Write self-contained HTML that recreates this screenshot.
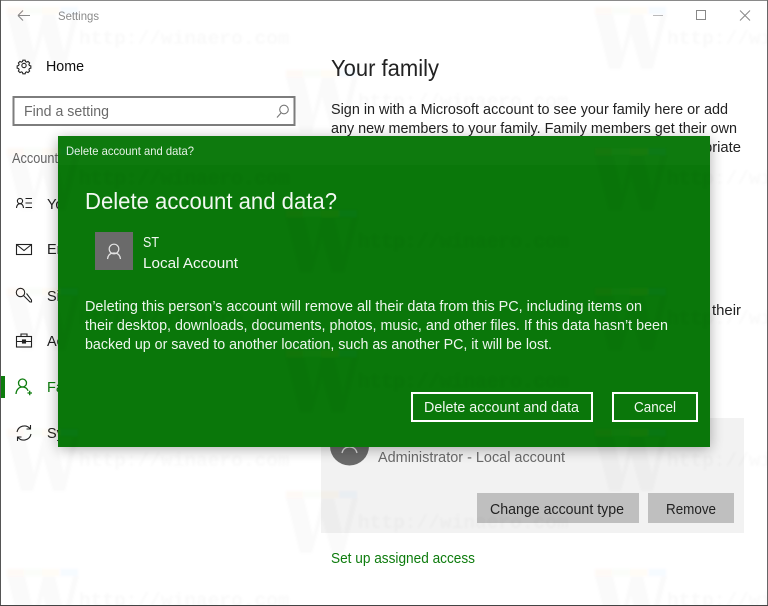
<!DOCTYPE html>
<html><head><meta charset="utf-8"><title>Settings</title>
<style>
html,body{margin:0;padding:0;background:#fff;width:768px;height:606px;overflow:hidden}
svg{display:block;position:absolute;left:0;top:0}
text{font-family:"Liberation Sans",sans-serif;font-size:14.5px;white-space:pre}
.wm{font-family:"Liberation Mono",monospace;font-weight:bold;font-size:19.5px;fill:#000;opacity:.022}
.w{fill:#000;opacity:.02}
.ic{fill:none;stroke:#222;stroke-width:1.1}
</style></head><body>
<svg width="768" height="606" viewBox="0 0 768 606" xmlns="http://www.w3.org/2000/svg">
<defs>
<filter id="sh" x="-10%" y="-15%" width="120%" height="130%"><feGaussianBlur stdDeviation="7"/></filter>
<filter id="soft" x="-2%" y="-2%" width="104%" height="104%"><feGaussianBlur stdDeviation="1"/></filter>
<filter id="tx" x="-2%" y="-20%" width="104%" height="140%"><feGaussianBlur stdDeviation="0.35"/></filter>
<g id="W">
<polygon class="w" points="0,0 18,0 27,38 36,0 48,0 57,38 66,0 72,0 58,55 46,55 36,20 26,55 14,55"/>
<rect x="0" y="-7" width="17" height="7" fill="#e8492a" opacity=".035"/>
<rect x="17" y="-7" width="18" height="7" fill="#8bc34a" opacity=".035"/>
<rect x="35" y="-7" width="18" height="7" fill="#f7b500" opacity=".035"/>
<rect x="53" y="-7" width="18" height="7" fill="#2196f3" opacity=".035"/>
</g>
</defs>
<rect width="768" height="606" fill="#fff"/>

<g filter="url(#tx)">
<!-- title bar -->
<path d="M30 15.5H18M18 15.5l5-5M18 15.5l5 5" fill="none" stroke="#8a8a8a" stroke-width="1.1"/>
<text x="58" y="20" fill="#8a8a8a" textLength="41" lengthAdjust="spacingAndGlyphs" style="font-size:12px">Settings</text>
<rect x="653" y="15" width="10" height="1" fill="#bbb"/>
<rect x="696.5" y="10.5" width="9" height="9" fill="none" stroke="#888" stroke-width="1"/>
<path d="M740 10.5l10 10M750 10.5l-10 10" stroke="#888" stroke-width="1" fill="none"/>

<!-- home -->
<g transform="translate(24,65.5) scale(.72)" fill="none" stroke="#222" stroke-width="1.5">
<circle r="3"/>
<path d="M-1.6-7.4h3.2l.5 2 1.6.7 1.9-1 2.2 2.2-1 1.9.7 1.6 2 .5v3.2l-2 .5-.7 1.6 1 1.9-2.2 2.2-1.9-1-1.6.7-.5 2h-3.2l-.5-2-1.6-.7-1.9 1-2.2-2.2 1-1.9-.7-1.6-2-.5v-3.2l2-.5.7-1.6-1-1.9 2.2-2.2 1.9 1 1.6-.7z"/>
</g>
<text x="46" y="71" fill="#111" textLength="38" lengthAdjust="spacingAndGlyphs">Home</text>

<!-- search -->
<rect x="13.500" y="97" width="281" height="28" fill="#fff" stroke="#7d7d7d" stroke-width="2"/>
<text x="24" y="116" fill="#6a6a6a" textLength="85" lengthAdjust="spacingAndGlyphs">Find a setting</text>
<circle cx="284" cy="109.500" r="4.300" fill="none" stroke="#777" stroke-width="1.100"/>
<path d="M281 113l-4 4.500" stroke="#777" stroke-width="1.100" fill="none"/>

<!-- sidebar -->
<text x="12" y="163" fill="#666" textLength="46" lengthAdjust="spacingAndGlyphs">Account</text>

<g class="ic">
<circle cx="20" cy="201" r="2.600"/>
<path d="M16.500 208c.3-3 1.800-4.300 3.500-4.300s3.200 1.300 3.500 4.300"/>
<path d="M25.500 198.500h6.500M25.500 203h6.500M25.500 207.500h6.500"/>
<rect x="16.500" y="244.500" width="15" height="10"/>
<path d="M16.500 244.500l7.500 6 7.500-6"/>
<circle cx="20.500" cy="292.500" r="4.200"/>
<path d="M23.500 295.500l6.500 6.500h1.500v-2l-5-6.500"/>
<rect x="16.500" y="336.500" width="15" height="10.500"/>
<path d="M21 336.500v-2.500h6v2.500M16.500 341.500h15"/>
<rect x="22.500" y="340" width="3" height="3" fill="#222"/>
<path d="M30 428.500a7.500 7.500 0 0 0-13 3.500M18 437.500a7.500 7.500 0 0 0 13-3.500M30.500 425v4h-4M17.500 441v-4h4"/>
</g>
<g fill="none" stroke="#107c10" stroke-width="1.300">
<circle cx="22.500" cy="383" r="4"/>
<path d="M16 394c.4-4.500 3-7 6.500-7 2.500 0 4.600 1.300 5.600 3.800"/>
<path d="M27.500 393h4.500M29.700 390.800v4.500"/>
</g>
<rect x="1" y="376" width="4" height="22" fill="#107c10"/>
<text x="47" y="209" fill="#222">Yo</text>
<text x="47" y="254" fill="#222">En</text>
<text x="47" y="301" fill="#222">Si</text>
<text x="47" y="346" fill="#222">Ac</text>
<text x="47" y="392" fill="#107c10">Fa</text>
<text x="47" y="438" fill="#222">Sy</text>

<!-- main -->
<text x="331" y="76" fill="#222" textLength="108" lengthAdjust="spacingAndGlyphs" style="font-size:23px">Your family</text>
<text x="331" y="114" fill="#222" textLength="397" lengthAdjust="spacingAndGlyphs">Sign in with a Microsoft account to see your family here or add</text>
<text x="331" y="133" fill="#222" textLength="406" lengthAdjust="spacingAndGlyphs">any new members to your family. Family members get their own</text>
<text x="704" y="152" fill="#222" textLength="37" lengthAdjust="spacingAndGlyphs">priate</text>
<text x="712" y="315" fill="#222" textLength="29" lengthAdjust="spacingAndGlyphs">their</text>

<!-- account panel -->
<rect x="321" y="418" width="423" height="115" fill="#f2f2f2"/>
<circle cx="349.500" cy="446" r="19.500" fill="#6b6b6b"/>
<path d="M342 453c1-4.500 4-6 7.500-6s6.500 1.500 7.500 6" fill="none" stroke="#ddd" stroke-width="1.200"/>
<text x="378" y="462" fill="#6a6a6a" textLength="187" lengthAdjust="spacingAndGlyphs">Administrator - Local account</text>
<rect x="477" y="493" width="162" height="30" fill="#bfbfbf"/>
<rect x="648" y="493" width="86" height="30" fill="#bfbfbf"/>
<text x="490" y="514" fill="#222" textLength="134" lengthAdjust="spacingAndGlyphs">Change account type</text>
<text x="666" y="514" fill="#222" textLength="50" lengthAdjust="spacingAndGlyphs">Remove</text>
<text x="331" y="563" fill="#107c10" textLength="144" lengthAdjust="spacingAndGlyphs">Set up assigned access</text>
</g>

<!-- dialog -->
<rect x="58" y="139" width="652" height="310" fill="#000" opacity=".32" filter="url(#sh)"/>
<rect x="58" y="136" width="652" height="311" fill="#0a770a"/>
<rect x="58" y="136" width="652" height="29" fill="#0e7a0e"/>
<g filter="url(#tx)">
<text x="66" y="155" fill="#e6f2e6" textLength="128" lengthAdjust="spacingAndGlyphs" style="font-size:12px">Delete account and data?</text>
<text x="85" y="209" fill="#f2f8f2" textLength="252" lengthAdjust="spacingAndGlyphs" style="font-size:23px">Delete account and data?</text>
<rect x="95" y="232" width="38" height="38" fill="#6b6b6b"/>
<circle cx="114" cy="249" r="4.800" fill="none" stroke="#e4e4e4" stroke-width="1.200"/>
<path d="M107.500 259c.5-4.500 3-6 6.500-6s6 1.500 6.500 6" fill="none" stroke="#e4e4e4" stroke-width="1.200"/>
<text x="143" y="247" fill="#f2f8f2" textLength="16" lengthAdjust="spacingAndGlyphs">ST</text>
<text x="143" y="268" fill="#f2f8f2" textLength="95" lengthAdjust="spacingAndGlyphs">Local Account</text>
<text x="85" y="311" fill="#eef6ee" textLength="557" lengthAdjust="spacingAndGlyphs">Deleting this person’s account will remove all their data from this PC, including items on</text>
<text x="85" y="330" fill="#eef6ee" textLength="583" lengthAdjust="spacingAndGlyphs">their desktop, downloads, documents, photos, music, and other files. If this data hasn’t been</text>
<text x="85" y="349" fill="#eef6ee" textLength="467" lengthAdjust="spacingAndGlyphs">backed up or saved to another location, such as another PC, it will be lost.</text>
<rect x="412" y="393" width="180" height="28" fill="none" stroke="#fff" stroke-width="2"/>
<rect x="613" y="393" width="84" height="28" fill="none" stroke="#fff" stroke-width="2"/>
<text x="424" y="412" fill="#f2f8f2" textLength="155" lengthAdjust="spacingAndGlyphs">Delete account and data</text>
<text x="634" y="412" fill="#f2f8f2" textLength="42" lengthAdjust="spacingAndGlyphs">Cancel</text>
</g>

<!-- watermark overlay -->
<g filter="url(#soft)">
<use href="#W" x="7" y="14"/><use href="#W" x="7" y="155"/><use href="#W" x="7" y="295"/><use href="#W" x="7" y="436"/><use href="#W" x="7" y="576"/>
<use href="#W" x="286" y="77"/><use href="#W" x="286" y="217"/><use href="#W" x="286" y="357"/><use href="#W" x="286" y="498"/>
<use href="#W" x="595" y="14"/><use href="#W" x="595" y="155"/><use href="#W" x="595" y="295"/><use href="#W" x="595" y="436"/><use href="#W" x="595" y="576"/>
<text class="wm" x="79" y="44">http://winaero.com</text>
<text class="wm" x="79" y="184">http://winaero.com</text>
<text class="wm" x="79" y="324">http://winaero.com</text>
<text class="wm" x="79" y="466">http://winaero.com</text>
<text class="wm" x="79" y="606">http://winaero.com</text>
<text class="wm" x="358" y="107">http://winaero.com</text>
<text class="wm" x="358" y="247">http://winaero.com</text>
<text class="wm" x="358" y="387">http://winaero.com</text>
<text class="wm" x="358" y="528">http://winaero.com</text>
<text class="wm" x="667" y="44">http://winaero.com</text>
<text class="wm" x="667" y="184">http://winaero.com</text>
<text class="wm" x="667" y="324">http://winaero.com</text>
<text class="wm" x="667" y="466">http://winaero.com</text>
<text class="wm" x="667" y="606">http://winaero.com</text>
</g>

<!-- window border -->
<rect x="0" y="0" width="768" height="1" fill="#8a8a8a"/>
<rect x="0" y="0" width="1" height="606" fill="#555"/>
<rect x="767" y="0" width="1" height="606" fill="#666"/>
<rect x="0" y="605" width="768" height="1" fill="#444"/>
</svg>
</body></html>
